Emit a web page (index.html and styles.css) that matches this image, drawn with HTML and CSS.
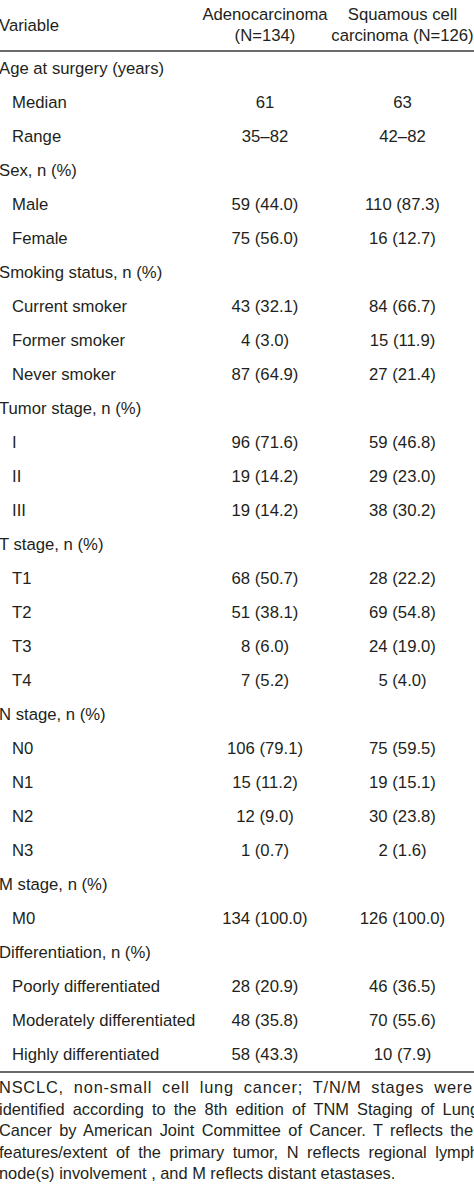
FILE: index.html
```html
<!DOCTYPE html>
<html>
<head>
<meta charset="utf-8">
<link rel="stylesheet" href="styles.css">
</head>
<body>
<div class="page">
<table class="tbl">
<colgroup><col class="c1"><col class="c2"><col class="c3"></colgroup>
<thead>
<tr class="head"><th class="var">Variable</th><th>Adenocarcinoma<br>(N=134)</th><th>Squamous cell<br>carcinoma (N=126)</th></tr>
</thead>
<tbody>
<tr class="grp"><td>Age at surgery (years)</td><td></td><td></td></tr>
<tr><td class="sub">Median</td><td>61</td><td>63</td></tr>
<tr><td class="sub">Range</td><td>35–82</td><td>42–82</td></tr>
<tr class="grp"><td>Sex, n (%)</td><td></td><td></td></tr>
<tr><td class="sub">Male</td><td>59 (44.0)</td><td>110 (87.3)</td></tr>
<tr><td class="sub">Female</td><td>75 (56.0)</td><td>16 (12.7)</td></tr>
<tr class="grp"><td>Smoking status, n (%)</td><td></td><td></td></tr>
<tr><td class="sub">Current smoker</td><td>43 (32.1)</td><td>84 (66.7)</td></tr>
<tr><td class="sub">Former smoker</td><td>4 (3.0)</td><td>15 (11.9)</td></tr>
<tr><td class="sub">Never smoker</td><td>87 (64.9)</td><td>27 (21.4)</td></tr>
<tr class="grp"><td>Tumor stage, n (%)</td><td></td><td></td></tr>
<tr><td class="sub">I</td><td>96 (71.6)</td><td>59 (46.8)</td></tr>
<tr><td class="sub">II</td><td>19 (14.2)</td><td>29 (23.0)</td></tr>
<tr><td class="sub">III</td><td>19 (14.2)</td><td>38 (30.2)</td></tr>
<tr class="grp"><td>T stage, n (%)</td><td></td><td></td></tr>
<tr><td class="sub">T1</td><td>68 (50.7)</td><td>28 (22.2)</td></tr>
<tr><td class="sub">T2</td><td>51 (38.1)</td><td>69 (54.8)</td></tr>
<tr><td class="sub">T3</td><td>8 (6.0)</td><td>24 (19.0)</td></tr>
<tr><td class="sub">T4</td><td>7 (5.2)</td><td>5 (4.0)</td></tr>
<tr class="grp"><td>N stage, n (%)</td><td></td><td></td></tr>
<tr><td class="sub">N0</td><td>106 (79.1)</td><td>75 (59.5)</td></tr>
<tr><td class="sub">N1</td><td>15 (11.2)</td><td>19 (15.1)</td></tr>
<tr><td class="sub">N2</td><td>12 (9.0)</td><td>30 (23.8)</td></tr>
<tr><td class="sub">N3</td><td>1 (0.7)</td><td>2 (1.6)</td></tr>
<tr class="grp"><td>M stage, n (%)</td><td></td><td></td></tr>
<tr><td class="sub">M0</td><td>134 (100.0)</td><td>126 (100.0)</td></tr>
<tr class="grp"><td>Differentiation, n (%)</td><td></td><td></td></tr>
<tr><td class="sub">Poorly differentiated</td><td>28 (20.9)</td><td>46 (36.5)</td></tr>
<tr><td class="sub">Moderately differentiated</td><td>48 (35.8)</td><td>70 (55.6)</td></tr>
<tr class="last"><td class="sub">Highly differentiated</td><td>58 (43.3)</td><td>10 (7.9)</td></tr>
</tbody>
</table>
<div class="note">
<div class="jl fit first">NSCLC, non-small cell lung cancer; T/N/M stages were</div>
<div class="jl wide">identified according to the 8th edition of TNM Staging of Lung</div>
<div class="jl fit">Cancer by American Joint Committee of Cancer. T reflects the</div>
<div class="jl wide">features/extent of the primary tumor, N reflects regional lymph</div>
<div class="ll">node(s) involvement , and M reflects distant etastases.</div>
</div>
</div>
</body>
</html>
```
FILE: styles.css
```css
html, body {
  margin: 0;
  padding: 0;
  background: #fff;
  overflow: hidden;
}
body {
  font-family: "Liberation Sans", Arial, sans-serif;
  color: #231f20;
  font-size: 16.7px;
}
.page {
  width: 480px;
  margin-left: -1px;
}
.tbl {
  border-collapse: collapse;
  width: 476px;
  table-layout: fixed;
}
.c1 { width: 201px; }
.c2 { width: 130px; }
.c3 { width: 145px; }
.tbl th {
  font-weight: normal;
  text-align: center;
  line-height: 21px;
  height: 49px;
  padding: 0 0 1px 0;
  vertical-align: middle;
  border-bottom: 2px solid #6a6a6a;
}
.tbl th.var {
  text-align: left;
  padding-top: 1px;
  padding-bottom: 0;
}
.tbl td {
  height: 34px;
  padding: 0;
  text-align: center;
  vertical-align: middle;
  white-space: nowrap;
}
.tbl td:first-child {
  text-align: left;
}
.tbl td.sub {
  padding-left: 13px;
}
.tbl tr.last td {
  border-bottom: 2px solid #6a6a6a;
  height: 33px;
}
.note {
  width: 480px;
  padding-top: 4px;
  line-height: 21.6px;
  font-size: 16.4px;
}
.jl {
  text-align: justify;
  text-align-last: justify;
}
.fit {
  width: 474px;
}
.wide {
  width: 480px;
}
.first {
  letter-spacing: 0.8px;
}
.ll {
  text-align: left;
}
```
